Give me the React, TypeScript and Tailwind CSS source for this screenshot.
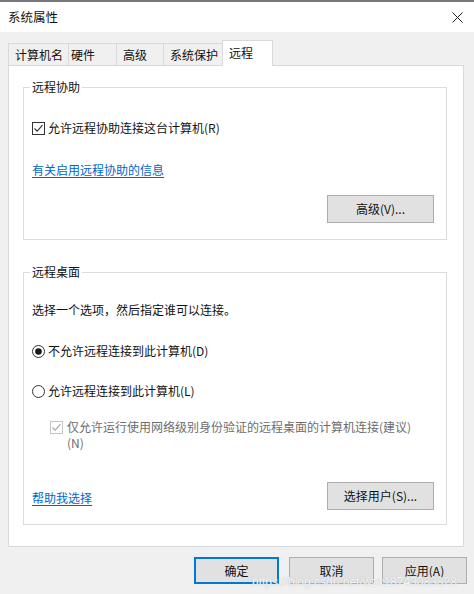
import React from "react";

const FONT = `"Noto Sans CJK SC", "Microsoft YaHei", sans-serif`;

function CheckBox({ disabled = false }: { disabled?: boolean }) {
  const stroke = disabled ? "#a6a6a6" : "#333333";
  return (
    <svg width="13" height="13" viewBox="0 0 13 13" className="shrink-0">
      <rect x="0.5" y="0.5" width="12" height="12" fill="#fff" stroke={disabled ? "#c4c4c4" : "#333"} />
      <path d="M2.5 6.5 L5.2 9.2 L10.5 3.2" fill="none" stroke={stroke} strokeWidth="1.1" />
    </svg>
  );
}

function Radio({ checked }: { checked: boolean }) {
  return (
    <svg width="13" height="13" viewBox="0 0 13 13" className="shrink-0">
      <circle cx="6.5" cy="6.5" r="6" fill="#fff" stroke="#333" />
      {checked && <circle cx="6.5" cy="6.5" r="3.3" fill="#1a1a1a" />}
    </svg>
  );
}

function Tab({ label, w, pl, active = false }: { label: string; w: string; pl: string; active?: boolean }) {
  return active ? (
    <div className={`${w} ${pl} h-[26px] bg-white border border-b-0 border-[#d9d9d9] flex items-center pb-[2px]`}>
      {label}
    </div>
  ) : (
    <div className={`${w} ${pl} h-[23px] bg-[#f0f0f0] border border-[#d9d9d9] border-r-0 flex items-center pt-[1px]`}>
      {label}
    </div>
  );
}

function GroupBox({ title, className, children }: { title: string; className: string; children: React.ReactNode }) {
  return (
    <div className={`relative border border-[#dcdcdc] ${className}`}>
      <span className="absolute -top-[9px] left-[6px] bg-white px-[2px] leading-[16px]">{title}</span>
      {children}
    </div>
  );
}

function Btn({ children, primary = false, className = "" }: { children: React.ReactNode; primary?: boolean; className?: string }) {
  return (
    <div
      className={`w-[85px] h-[27px] flex items-center justify-center bg-[#e1e1e1] ${
        primary ? "border-2 border-[#0078d7]" : "border border-[#adadad]"
      } ${className}`}
    >
      {children}
    </div>
  );
}

export default function App() {
  return (
    <div
      className="relative w-[474px] h-[594px] bg-[#f0f0f0] text-[12px] leading-[16px] text-[#111] overflow-hidden"
      style={{ fontFamily: FONT }}
    >
      {/* top edge */}
      <div className="h-[2px] bg-[#74787c]" />

      {/* title bar */}
      <div className="h-[30px] bg-white flex items-center justify-between pl-[8px] pr-[11px]">
        <span className="text-[12.5px]">系统属性</span>
        <svg width="11" height="11" viewBox="0 0 11 11">
          <path d="M0.5 0.5 L10.5 10.5 M10.5 0.5 L0.5 10.5" stroke="#222" strokeWidth="1" />
        </svg>
      </div>

      {/* tabs */}
      <div className="mt-[8px] ml-[8px] flex items-end relative z-10 -mb-px">
        <Tab label="计算机名" w="w-[60px]" pl="pl-[6px]" />
        <Tab label="硬件" w="w-[48px]" pl="pl-[2px]" />
        <Tab label="高级" w="w-[47px]" pl="pl-[6px]" />
        <Tab label="系统保护" w="w-[59px]" pl="pl-[6px]" />
        <Tab label="远程" w="w-[51px]" pl="pl-[6px]" active />
      </div>

      {/* tab panel */}
      <div className="ml-[8px] w-[456px] h-[482px] bg-white border border-[#d9d9d9] pt-[21px] pl-[14px] pr-[16px]">
        <GroupBox title="远程协助" className="h-[153px] pt-[32px] pl-[8px] pr-[12px]">
          <div className="flex items-center gap-[3px] h-[16px]">
            <CheckBox />
            <span>允许远程协助连接这台计算机(R)</span>
          </div>
          <div className="mt-[26px] h-[16px]">
            <span className="text-[#0066cc] underline underline-offset-2">有关启用远程协助的信息</span>
          </div>
          <div className="mt-[17px] flex justify-end">
            <div className="w-[107px] h-[28px] flex items-center justify-center bg-[#e1e1e1] border border-[#adadad]">
              高级(V)...
            </div>
          </div>
        </GroupBox>

        <GroupBox title="远程桌面" className="mt-[32px] h-[253px] pt-[29px] pl-[8px] pr-[12px]">
          <div className="h-[16px]">选择一个选项，然后指定谁可以连接。</div>
          <div className="mt-[25px] flex items-center gap-[3px] h-[16px]">
            <Radio checked />
            <span>不允许远程连接到此计算机(D)</span>
          </div>
          <div className="mt-[24px] flex items-center gap-[3px] h-[16px]">
            <Radio checked={false} />
            <span>允许远程连接到此计算机(L)</span>
          </div>
          <div className="mt-[20px] ml-[18px] flex items-start gap-[4px] text-[#6d6d6d]">
            <div className="pt-[2px]">
              <CheckBox disabled />
            </div>
            <div>
              <div>仅允许运行使用网络级别身份验证的远程桌面的计算机连接(建议)</div>
              <div>(N)</div>
            </div>
          </div>
          <div className="mt-[31px] flex items-center justify-between">
            <span className="text-[#0066cc] underline underline-offset-2 pt-[3px]">帮助我选择</span>
            <div className="w-[107px] h-[28px] flex items-center justify-center bg-[#e1e1e1] border border-[#adadad]">
              选择用户(S)...
            </div>
          </div>
        </GroupBox>
      </div>

      {/* dialog buttons */}
      <div className="mt-[10px] flex justify-end pr-[7px]">
        <Btn primary>确定</Btn>
        <Btn className="ml-[10px]">取消</Btn>
        <Btn className="ml-[8px]">应用(A)</Btn>
      </div>

      {/* watermark */}
      <div
        className="absolute left-[252px] top-[575px] text-[12px] leading-[14px] text-white/90"
        style={{ fontFamily: '"Liberation Sans", Arial, sans-serif', textShadow: "0 0 1px #9aa3ad" }}
      >
        https://blog.csdn.net/wzc18743083828
      </div>
    </div>
  );
}
